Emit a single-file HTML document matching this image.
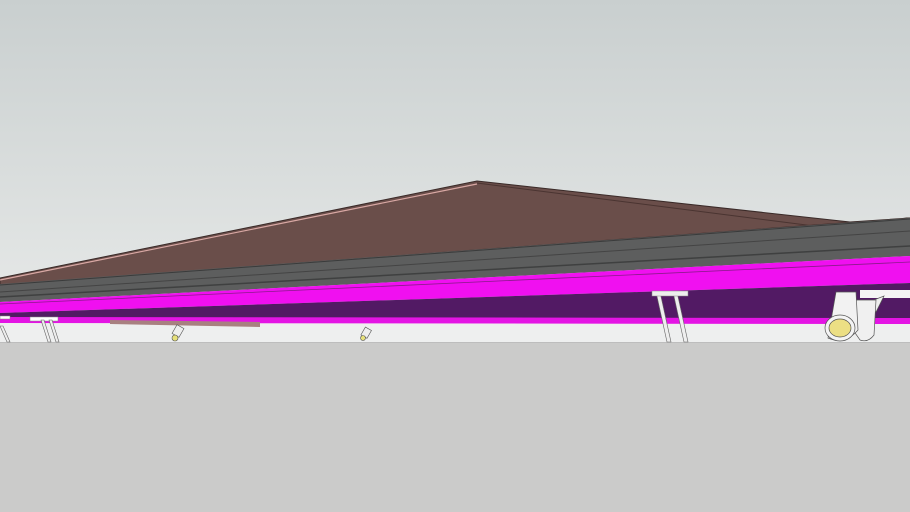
<!DOCTYPE html>
<html><head><meta charset="utf-8"><style>html,body{margin:0;padding:0;overflow:hidden}svg{display:block}</style></head><body>
<svg width="910" height="512" viewBox="0 0 910 512" xmlns="http://www.w3.org/2000/svg">
<defs><linearGradient id="sky" x1="0" y1="0" x2="0" y2="1"><stop offset="0" stop-color="#c9cfcf"/><stop offset="1" stop-color="#e9ebea"/></linearGradient></defs>
<rect width="910" height="342" fill="url(#sky)"/>
<rect y="322" width="910" height="20" fill="#eeefef"/>
<rect y="342" width="910" height="170" fill="#cbcbca"/>
<line x1="0" y1="342.5" x2="910" y2="342.5" stroke="#bdbdbd"/>
<!-- roof -->
<polygon points="0,278 477,181 850,222 910,218 0,285" fill="#6a4e4a" stroke="#3a2a28" stroke-width="1"/>
<polyline points="0,280 477,184" stroke="#d9a8a4" stroke-width="1.2" fill="none"/>
<polyline points="477,183 830,228" stroke="#4a3431" stroke-width="1" fill="none"/>
<!-- gray gutter -->
<polygon points="0,284 910,218 910,256 0,302" fill="#5d5e5e"/>
<polyline points="0,292 910,231" stroke="#444" stroke-width="1" fill="none"/>
<polyline points="0,297 910,246" stroke="#3f4040" stroke-width="1.5" fill="none"/>
<polyline points="0,285 910,219" stroke="#3a3b3b" stroke-width="1" fill="none"/>
<!-- magenta band -->
<polygon points="0,302 910,256 910,283 0,313" fill="#f010f0"/>
<polyline points="0,304 910,262" stroke="#8a1a8a" stroke-width="0.8" fill="none"/>
<!-- purple -->
<polygon points="0,313 910,283 910,318 0,318" fill="#521a64"/>
<polygon points="0,317 910,318 910,324 0,323" fill="#e414e4"/>
<polygon points="110,320 260,322 260,327 110,324" fill="#a88080"/>
<!-- left brackets -->
<rect x="0" y="316" width="10" height="3" fill="#fff" stroke="#888" stroke-width="0.5"/>
<rect x="30" y="317" width="28" height="4" fill="#fff" stroke="#888" stroke-width="0.5"/>
<g stroke="#666" stroke-width="0.6" fill="#eee">
<polygon points="0,326 3,326 10,342 7,342"/>
<polygon points="41,320 44,320 51,342 48,342"/>
<polygon points="49,320 52,320 59,342 56,342"/>
<polygon points="656,292 660,292 671,342 667,342"/>
<polygon points="673,292 677,292 688,342 684,342"/>
</g>
<rect x="652" y="291" width="36" height="5" fill="#eee" stroke="#888" stroke-width="0.5"/>
<!-- small lights -->
<g stroke="#555" stroke-width="0.6">
<rect x="174" y="326" width="8" height="10" fill="#eee" transform="rotate(30 178 331)"/>
<ellipse cx="175" cy="338" rx="3" ry="3" fill="#e6e07a"/>
<rect x="363" y="328" width="7" height="9" fill="#eee" transform="rotate(30 366 332)"/>
<ellipse cx="363" cy="338" rx="2.5" ry="2.5" fill="#e6e07a"/>
</g>
<!-- right big light -->
<rect x="860" y="290" width="50" height="8" fill="#f4f4f4"/>
<g stroke="#555" stroke-width="0.7">
<polygon points="866,303 884,296 876,312" fill="#eee"/>
<path d="M853,300 L876,300 L874,335 Q868,343 860,340 L853,330 Z" fill="#f0f0f0"/>
<path d="M836,292 L856,292 L858,330 Q845,345 828,338 Z" fill="#f2f2f2"/>
<ellipse cx="840" cy="328" rx="15" ry="13" fill="#f4f4f4"/>
<ellipse cx="840" cy="328" rx="11" ry="9" fill="#ecdf84"/>
</g>
</svg>
</body></html>
